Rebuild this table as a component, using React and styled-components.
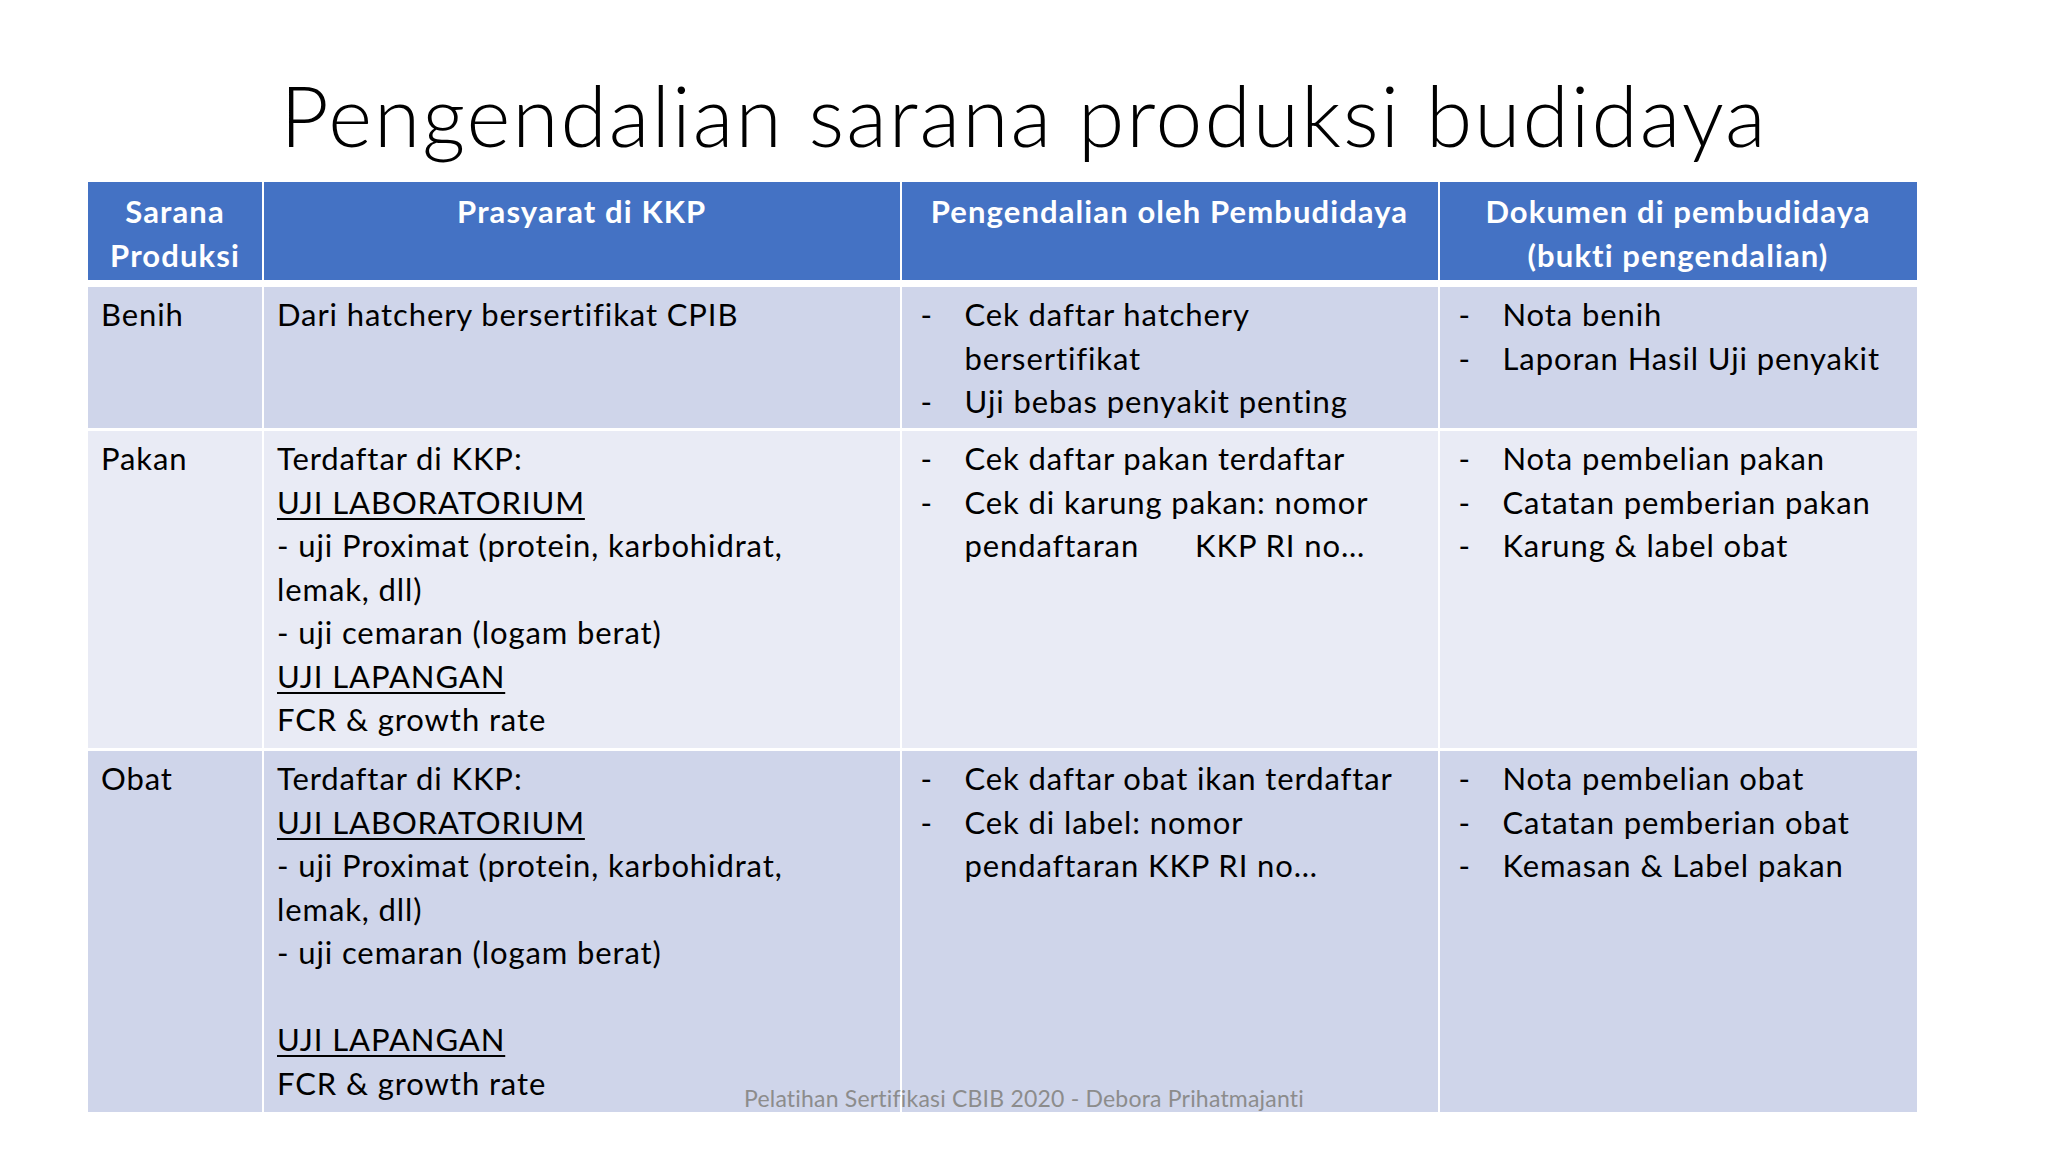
import React from 'react';
import styled, { createGlobalStyle } from 'styled-components';

const GlobalStyle = createGlobalStyle`
  html, body {
    margin: 0;
    padding: 0;
    background: #ffffff;
  }

  body {
    color: #000000;
    font-family: Lato, 'Noto Sans', sans-serif;
  }
`;

const BANDS = {
  dark: '#cfd5ea',
  light: '#e9ebf5',
};

const Slide = styled.div`
  background: #ffffff;
  height: 1152px;
  overflow: hidden;
  position: relative;
  width: 2048px;
`;

const Title = styled.h1`
  box-sizing: border-box;
  font-size: 84px;
  font-weight: 300;
  height: 182px;
  letter-spacing: 2px;
  line-height: 84px;
  margin: 0;
  padding-top: 73px;
  text-align: center;
`;

const Table = styled.div`
  display: flex;
  flex-direction: column;
  margin-left: 88px;
  width: 1828px;
`;

const Row = styled.div`
  column-gap: 2px;
  display: grid;
  grid-template-columns: 174px 635.5px 536px 477px;
  height: ${props => props.height}px;
  margin-bottom: ${props => props.gap || 0}px;
`;

const HeadCell = styled.div`
  background: #4472c4;
  box-sizing: border-box;
  color: #ffffff;
  font-size: 31px;
  font-weight: 700;
  letter-spacing: 1.1px;
  line-height: 44px;
  padding: 7px 4px 0;
  text-align: center;
`;

const Cell = styled.div`
  background: ${props => BANDS[props.band]};
  box-sizing: border-box;
  font-size: 31px;
  letter-spacing: 0.9px;
  line-height: 43.5px;
  padding: 6px 8px 0 ${props => (props.list ? 19 : 13)}px;
`;

const Line = styled.div`
  min-height: 43.5px;
  white-space: nowrap;
`;

const Heading = styled.span`
  text-decoration: underline;
  text-decoration-thickness: 2px;
  text-underline-offset: 4px;
`;

const Item = styled.div`
  display: flex;
`;

const Dash = styled.span`
  flex: 0 0 44px;
`;

const ItemText = styled.span`
  flex: 1;
  white-space: nowrap;
`;

const Tab = styled.span`
  display: inline-block;
  width: 56px;
`;

const Footer = styled.div`
  color: #8c8c8c;
  font-size: 23px;
  left: 0;
  letter-spacing: 0.2px;
  line-height: 26px;
  position: absolute;
  right: 0;
  text-align: center;
  top: 1085px;
`;

const Bullets = ({ items }) => (
  <>
    {items.map((text, i) => (
      <Item key={i}>
        <Dash>-</Dash>
        <ItemText>{text}</ItemText>
      </Item>
    ))}
  </>
);

const Requirements = ({ spaced }) => (
  <>
    <Line>Terdaftar di KKP:</Line>
    <Line><Heading>UJI LABORATORIUM</Heading></Line>
    <Line>- uji Proximat (protein, karbohidrat,</Line>
    <Line>lemak, dll)</Line>
    <Line>- uji cemaran (logam berat)</Line>
    {spaced && <Line />}
    <Line><Heading>UJI LAPANGAN</Heading></Line>
    <Line>FCR &amp; growth rate</Line>
  </>
);

const App = () => {
  return (
    <Slide>
      <GlobalStyle />
      <Title>Pengendalian sarana produksi budidaya</Title>
      <Table>
        <Row height={98} gap={7}>
          <HeadCell>Sarana<br />Produksi</HeadCell>
          <HeadCell>Prasyarat di KKP</HeadCell>
          <HeadCell>Pengendalian oleh Pembudidaya</HeadCell>
          <HeadCell>Dokumen di pembudidaya<br />(bukti pengendalian)</HeadCell>
        </Row>

        <Row height={141} gap={3}>
          <Cell band="dark">Benih</Cell>
          <Cell band="dark">Dari hatchery bersertifikat CPIB</Cell>
          <Cell band="dark" list>
            <Bullets items={[<>Cek daftar hatchery<br />bersertifikat</>, 'Uji bebas penyakit penting']} />
          </Cell>
          <Cell band="dark" list>
            <Bullets items={['Nota benih', 'Laporan Hasil Uji penyakit']} />
          </Cell>
        </Row>

        <Row height={317} gap={3}>
          <Cell band="light">Pakan</Cell>
          <Cell band="light">
            <Requirements />
          </Cell>
          <Cell band="light" list>
            <Bullets
              items={[
                'Cek daftar pakan terdaftar',
                <>Cek di karung pakan: nomor<br />pendaftaran<Tab />KKP RI no…</>,
              ]}
            />
          </Cell>
          <Cell band="light" list>
            <Bullets items={['Nota pembelian pakan', 'Catatan pemberian pakan', 'Karung & label obat']} />
          </Cell>
        </Row>

        <Row height={360.5}>
          <Cell band="dark">Obat</Cell>
          <Cell band="dark">
            <Requirements spaced />
          </Cell>
          <Cell band="dark" list>
            <Bullets items={['Cek daftar obat ikan terdaftar', <>Cek di label: nomor<br />pendaftaran KKP RI no…</>]} />
          </Cell>
          <Cell band="dark" list>
            <Bullets items={['Nota pembelian obat', 'Catatan pemberian obat', 'Kemasan & Label pakan']} />
          </Cell>
        </Row>
      </Table>
      <Footer>Pelatihan Sertifikasi CBIB 2020 - Debora Prihatmajanti</Footer>
    </Slide>
  );
};

export default App;
